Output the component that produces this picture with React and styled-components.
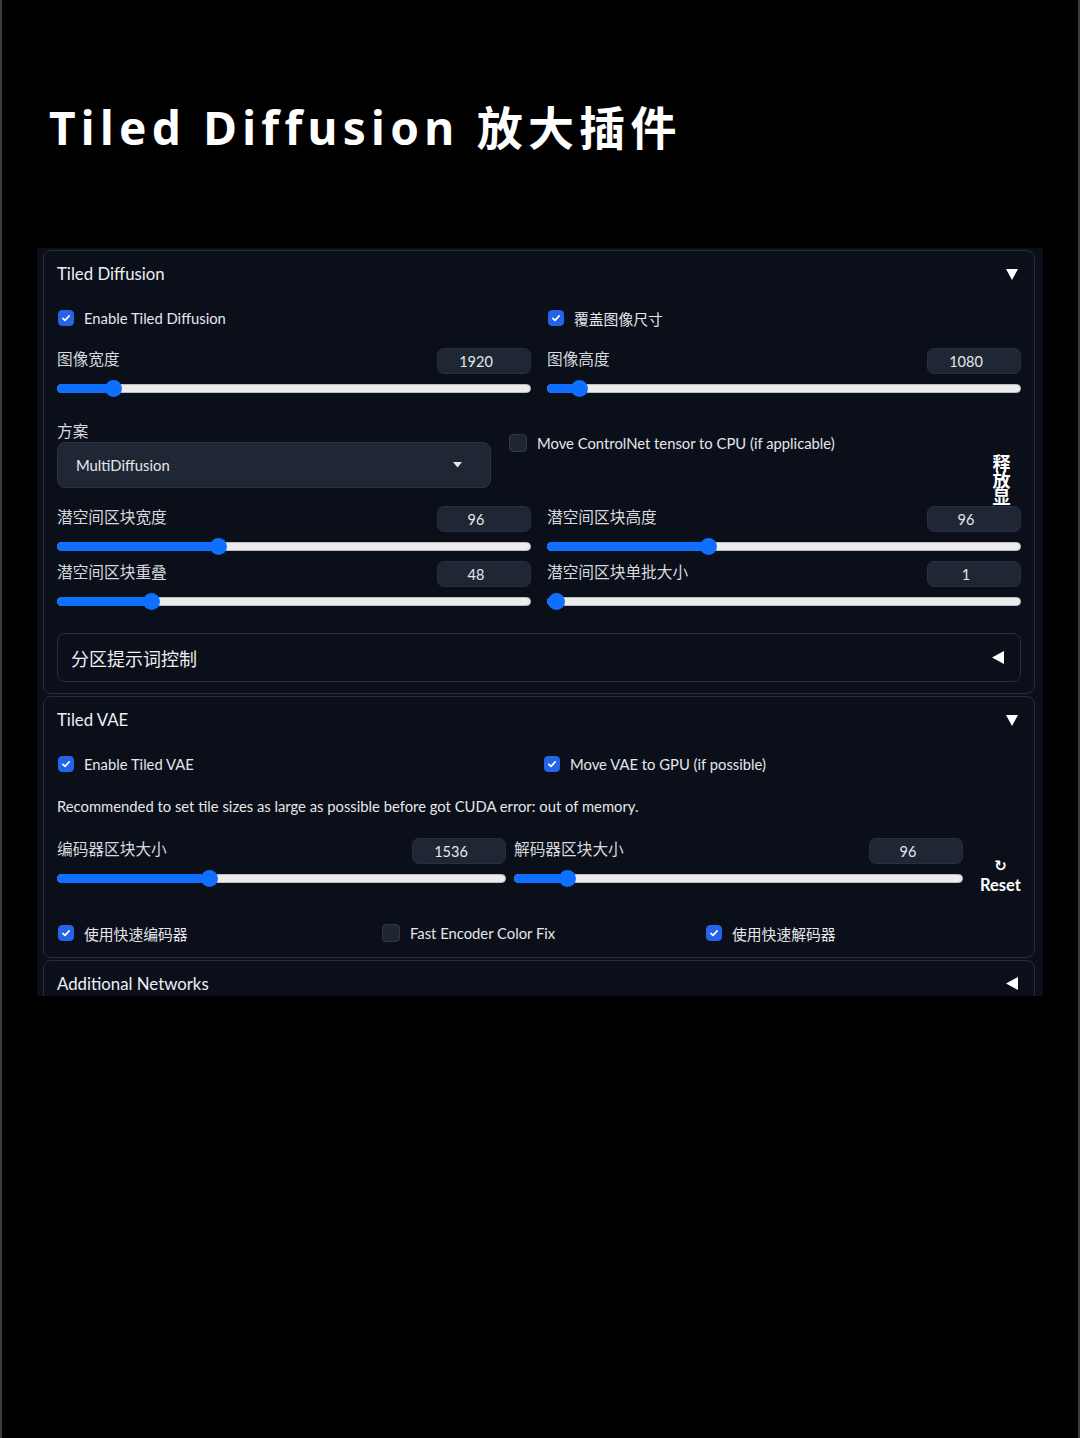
import React from 'react';
import styled, { createGlobalStyle } from "styled-components";

const GlobalStyle = createGlobalStyle`
  html, body {
    margin: 0;
    padding: 0;
    background: #000;
  }
  * { box-sizing: border-box; }
`

const Page = styled.div`
  width: 1080px;
  min-height: 1438px;
  background: #000;
  border-left: 2px solid #3b3b3b;
  border-right: 2px solid #3b3b3b;
  font-family: Lato, "Noto Sans CJK SC", sans-serif;
  color: #e5e7eb;
`

const Title = styled.h1`
  margin: 0;
  padding: 99px 0 0 47px;
  font-family: "Noto Sans", "Noto Sans CJK SC", sans-serif;
  font-weight: 700;
  font-size: 46px;
  line-height: 56px;
  letter-spacing: 5.3px;
  color: #fff;
`

const Shot = styled.div`
  margin: 93px 0 0 35px;
  width: 1006px;
  height: 748px;
  overflow: hidden;
  background: #0b0f19;
  padding: 2px 8px 0 6px;
  display: flex;
  flex-direction: column;
  gap: 2px;
`

const Panel = styled.div`
  border: 1px solid #262d3b;
  border-radius: 8px;
  padding: 0 13px ${p => p.$pb ?? 12}px 13px;
  display: flex;
  flex-direction: column;
`

const PanelHeader = styled.div`
  height: 45px;
  flex: none;
  display: flex;
  align-items: center;
  justify-content: space-between;
  font-size: 16.8px;
  color: #eceff3;
  svg { margin-right: 3px; }
`

const Row = styled.div`
  display: grid;
  grid-template-columns: ${p => p.$cols || '1fr 1fr'};
  column-gap: ${p => p.$gap || 16}px;
  align-items: ${p => p.$align || 'center'};
  height: ${p => p.$h ? p.$h + 'px' : 'auto'};
  margin-top: ${p => p.$mt || 0}px;
`

const CheckLabel = styled.label`
  display: flex;
  align-items: center;
  gap: 10px;
  font-size: 14.8px;
  color: #e5e7eb;
  padding-left: 1px;
`

const Box = styled.span`
  width: ${p => p.$checked ? 16 : 18}px;
  height: ${p => p.$checked ? 16 : 18}px;
  border-radius: 4px;
  flex: none;
  display: flex;
  align-items: center;
  justify-content: center;
  background: ${p => p.$checked ? '#2563eb' : '#1f2633'};
  border: 1px solid ${p => p.$checked ? '#2563eb' : '#303846'};
`

const Field = styled.div`
  display: flex;
  flex-direction: column;
`

const FieldTop = styled.div`
  height: 26px;
  display: flex;
  align-items: center;
  justify-content: space-between;
`

const FieldLabel = styled.span`
  font-size: 15.7px;
  color: #d6d9de;
  margin-top: -6px;
`

const NumBox = styled.div`
  width: 94px;
  height: 26px;
  border-radius: 7px;
  background: #1f2735;
  border: 1px solid #273041;
  display: flex;
  align-items: center;
  justify-content: center;
  padding-right: 16px;
  font-size: 14.5px;
  color: #e5e7eb;
`

const SliderWrap = styled.div`
  height: 28px;
  display: flex;
  align-items: center;
`

const Track = styled.div`
  position: relative;
  width: 100%;
  height: 9px;
  border-radius: 5px;
  background: #ececec;
  border: 1px solid #bdbdbd;
`

const Fill = styled.div`
  position: absolute;
  left: -1px;
  top: -1px;
  bottom: -1px;
  border-radius: 5px;
  background: #0f6fff;
`

const Thumb = styled.div`
  position: absolute;
  top: 50%;
  width: 17px;
  height: 17px;
  margin-left: -8.5px;
  margin-top: -8.5px;
  border-radius: 50%;
  background: #0f6fff;
`

const SectionLabel = styled.div`
  font-size: 15.7px;
  color: #d6d9de;
  height: 21px;
  line-height: 21px;
`

const Select = styled.div`
  height: 46px;
  border-radius: 8px;
  background: #1f2735;
  border: 1px solid #2a3344;
  display: flex;
  align-items: center;
  justify-content: space-between;
  padding: 0 28px 0 18px;
  font-size: 14.8px;
  color: #e5e7eb;
`

const RightCol = styled.div`
  width: 100%;
  display: flex;
  flex-direction: column;
  align-items: flex-start;
  padding-top: 13px;
`

const FreeButton = styled.div`
  align-self: flex-end;
  margin-right: 10px;
  margin-top: 2px;
  width: 19px;
  font-family: "Noto Sans CJK SC", sans-serif;
  font-weight: 700;
  font-size: 18px;
  line-height: 16.8px;
  color: #fff;
  text-align: center;
`

const Accordion = styled.div`
  margin-top: 18px;
  height: 49px;
  border: 1px solid #262d3b;
  border-radius: 8px;
  display: flex;
  align-items: center;
  justify-content: space-between;
  padding: 0 16px 0 13px;
  font-size: 18px;
  color: #eceff3;
`

const Note = styled.div`
  height: 20px;
  line-height: 20px;
  margin-top: 10px;
  font-size: 14.8px;
  color: #e5e7eb;
`

const ResetButton = styled.div`
  justify-self: end;
  align-self: start;
  height: 54px;
  padding-top: 20px;
  display: flex;
  flex-direction: column;
  align-items: center;
  font-size: 16.5px;
  font-weight: 700;
  color: #fff;
  line-height: 18px;
  span { font-family: "DejaVu Sans", sans-serif; font-size: 15px; line-height: 16px; margin-bottom: 2px; }
`

function Check({ checked, children }) {
  return (
    <CheckLabel>
      <Box $checked={checked}>
        {checked && (
          <svg width="10" height="10" viewBox="0 0 12 12">
            <path d="M2.2 6.4 L4.8 8.8 L9.8 3.4" fill="none" stroke="#fff" strokeWidth="2" strokeLinecap="round" strokeLinejoin="round" />
          </svg>
        )}
      </Box>
      {children}
    </CheckLabel>
  )
}

function Down({ size = 12 }) {
  return (
    <svg width={size} height={size} viewBox="0 0 12 12">
      <path d="M0 1 L12 1 L6 12 Z" fill="#fff" />
    </svg>
  )
}

function Left() {
  return (
    <svg width="12" height="13" viewBox="0 0 12 13">
      <path d="M12 0 L12 13 L0 6.5 Z" fill="#fff" />
    </svg>
  )
}

function Slider({ label, value, min, max }) {
  const pct = Math.max(0, Math.min(1, (value - min) / (max - min)))
  const pos = `calc(8.5px + ${pct} * (100% - 17px))`
  return (
    <Field>
      <FieldTop>
        <FieldLabel>{label}</FieldLabel>
        <NumBox>{value}</NumBox>
      </FieldTop>
      <SliderWrap>
        <Track>
          <Fill style={{ width: pos }} />
          <Thumb style={{ left: pos }} />
        </Track>
      </SliderWrap>
    </Field>
  )
}

function App() {
  return (
    <Page>
      <GlobalStyle />
      <Title>Tiled Diffusion 放大插件</Title>
      <Shot>
        <Panel $pb={11}>
          <PanelHeader>
            <span>Tiled Diffusion</span>
            <Down />
          </PanelHeader>
          <Row $h={44}>
            <Check checked>Enable Tiled Diffusion</Check>
            <Check checked>覆盖图像尺寸</Check>
          </Row>
          <Row $mt={8}>
            <Slider label="图像宽度" value={1920} min={256} max={16384} />
            <Slider label="图像高度" value={1080} min={256} max={16384} />
          </Row>
          <Row $cols="434px 1fr" $gap={17} $align="start" $mt={19} $h={85}>
            <div>
              <SectionLabel>方案</SectionLabel>
              <Select>
                <span>MultiDiffusion</span>
                <svg width="9" height="6" viewBox="0 0 9 6"><path d="M0 0 L9 0 L4.5 5.5 Z" fill="#e5e7eb" /></svg>
              </Select>
            </div>
            <RightCol>
              <Check>Move ControlNet tensor to CPU (if applicable)</Check>
              <FreeButton>释放显</FreeButton>
            </RightCol>
          </Row>
          <Row>
            <Slider label="潜空间区块宽度" value={96} min={16} max={256} />
            <Slider label="潜空间区块高度" value={96} min={16} max={256} />
          </Row>
          <Row $mt={1}>
            <Slider label="潜空间区块重叠" value={48} min={0} max={256} />
            <Slider label="潜空间区块单批大小" value={1} min={1} max={8} />
          </Row>
          <Accordion>
            <span>分区提示词控制</span>
            <Left />
          </Accordion>
        </Panel>

        <Panel $pb={9}>
          <PanelHeader>
            <span>Tiled VAE</span>
            <Down />
          </PanelHeader>
          <Row $h={44} $gap={8}>
            <Check checked>Enable Tiled VAE</Check>
            <Check checked>Move VAE to GPU (if possible)</Check>
          </Row>
          <Note>Recommended to set tile sizes as large as possible before got CUDA error: out of memory.</Note>
          <Row $cols="449px 449px 1fr" $gap={8} $align="start" $mt={22} $h={54}>
            <Slider label="编码器区块大小" value={1536} min={256} max={4096} />
            <Slider label="解码器区块大小" value={96} min={48} max={512} />
            <ResetButton>
              <span>↻</span>
              Reset
            </ResetButton>
          </Row>
          <Row $cols="1fr 1fr 1fr" $gap={8} $h={30} $mt={26}>
            <Check checked>使用快速编码器</Check>
            <Check>Fast Encoder Color Fix</Check>
            <Check checked>使用快速解码器</Check>
          </Row>
        </Panel>

        <Panel>
          <PanelHeader>
            <span>Additional Networks</span>
            <Left />
          </PanelHeader>
        </Panel>
      </Shot>
    </Page>
  )
}

export default App;
